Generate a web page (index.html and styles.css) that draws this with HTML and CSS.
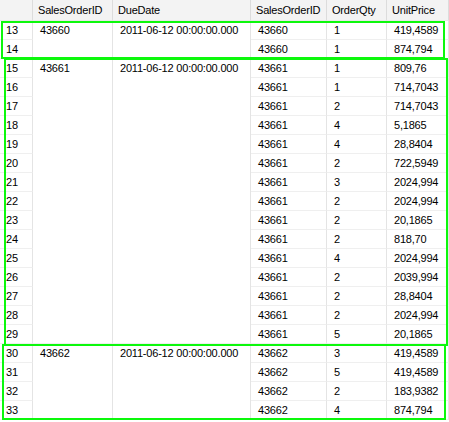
FILE: index.html
```html
<!DOCTYPE html>
<html>
<head>
<meta charset="utf-8">
<link rel="stylesheet" href="styles.css">
</head>
<body>
<div class="wrap">
  <div class="grid">
    <div class="h"></div><div class="h">SalesOrderID</div><div class="h">DueDate</div><div class="h">SalesOrderID</div><div class="h">OrderQty</div><div class="h">UnitPrice</div>

    <div class="n">13</div><div class="c m2">43660</div><div class="c m2">2011-06-12 00:00:00.000</div><div class="c">43660</div><div class="c">1</div><div class="c">419,4589</div>
    <div class="n">14</div><div class="c">43660</div><div class="c">1</div><div class="c">874,794</div>

    <div class="n">15</div><div class="c m15">43661</div><div class="c m15">2011-06-12 00:00:00.000</div><div class="c">43661</div><div class="c">1</div><div class="c">809,76</div>
    <div class="n">16</div><div class="c">43661</div><div class="c">1</div><div class="c">714,7043</div>
    <div class="n">17</div><div class="c">43661</div><div class="c">2</div><div class="c">714,7043</div>
    <div class="n">18</div><div class="c">43661</div><div class="c">4</div><div class="c">5,1865</div>
    <div class="n">19</div><div class="c">43661</div><div class="c">4</div><div class="c">28,8404</div>
    <div class="n">20</div><div class="c">43661</div><div class="c">2</div><div class="c">722,5949</div>
    <div class="n">21</div><div class="c">43661</div><div class="c">3</div><div class="c">2024,994</div>
    <div class="n">22</div><div class="c">43661</div><div class="c">2</div><div class="c">2024,994</div>
    <div class="n">23</div><div class="c">43661</div><div class="c">2</div><div class="c">20,1865</div>
    <div class="n">24</div><div class="c">43661</div><div class="c">2</div><div class="c">818,70</div>
    <div class="n">25</div><div class="c">43661</div><div class="c">4</div><div class="c">2024,994</div>
    <div class="n">26</div><div class="c">43661</div><div class="c">2</div><div class="c">2039,994</div>
    <div class="n">27</div><div class="c">43661</div><div class="c">2</div><div class="c">28,8404</div>
    <div class="n">28</div><div class="c">43661</div><div class="c">2</div><div class="c">2024,994</div>
    <div class="n">29</div><div class="c">43661</div><div class="c">5</div><div class="c">20,1865</div>

    <div class="n">30</div><div class="c m4">43662</div><div class="c m4">2011-06-12 00:00:00.000</div><div class="c">43662</div><div class="c">3</div><div class="c">419,4589</div>
    <div class="n">31</div><div class="c">43662</div><div class="c">5</div><div class="c">419,4589</div>
    <div class="n">32</div><div class="c">43662</div><div class="c">2</div><div class="c">183,9382</div>
    <div class="n">33</div><div class="c">43662</div><div class="c">4</div><div class="c">874,794</div>
  </div>
  <div class="box box1"></div>
  <div class="box box2"></div>
  <div class="box box3"></div>
</div>
</body>
</html>
```
FILE: styles.css
```css
html, body {
  margin: 0;
  padding: 0;
  background: #ffffff;
}
.wrap {
  position: relative;
  width: 449px;
  height: 422px;
  overflow: hidden;
}
.grid {
  display: grid;
  grid-template-columns: 33px 80px 138px 76px 60px 62px;
  grid-template-rows: 21px;
  grid-auto-rows: 19px;
  font-family: "Liberation Sans", Arial, sans-serif;
  font-size: 11px;
  letter-spacing: -0.2px;
  color: #000;
}
.grid > div {
  box-sizing: border-box;
  border-right: 1px solid #e4e4e4;
  border-bottom: 1px solid #efefef;
  white-space: nowrap;
  overflow: hidden;
}
.h {
  background: #f3f3f3;
  line-height: 20px;
  padding-left: 5px;
  color: #000;
  border-right-color: #dcdcdc !important;
  border-bottom-color: #e8e8e8 !important;
}
.n {
  line-height: 18px;
  padding-left: 6px;
}
.c {
  line-height: 18px;
  padding-left: 7px;
}
.m2 { grid-row: span 2; }
.m15 { grid-row: span 15; }
.m4 { grid-row: span 4; }
.box {
  position: absolute;
  box-sizing: border-box;
  border: 2px solid #0cf80c;
}
.box1 { left: 1px; top: 21px; width: 444px; height: 38px; }
.box2 { left: 4px; top: 58px; width: 444px; height: 288px; }
.box3 { left: 2px; top: 344px; width: 444px; height: 76px; }
```
